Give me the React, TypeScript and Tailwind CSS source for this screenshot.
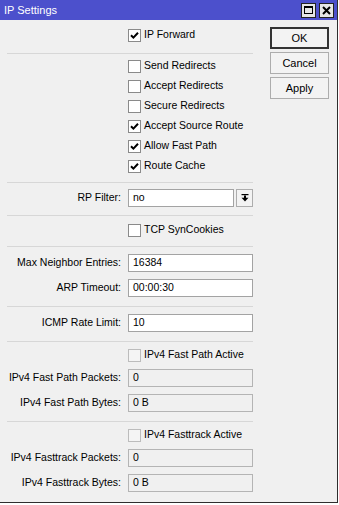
import React from 'react';

const FONT = { fontFamily: '"Liberation Sans", Arial, sans-serif' };

const Sep = ({ mt }: { mt: string }) => <div className={`${mt} h-px bg-[#d7d7d7]`} />;

const CheckBox = ({ checked, disabled }: { checked?: boolean; disabled?: boolean }) => (
  <div
    className={`w-[13px] h-[13px] border flex items-center justify-center ${
      disabled ? 'border-[#bcbcbc] bg-[#f4f4f4]' : 'border-[#8a8a8a] bg-white'
    }`}
  >
    {checked && (
      <svg width="9" height="9" viewBox="0 0 9 9">
        <path d="M1 4.2 L3.4 6.6 L8 1.8" fill="none" stroke="#000" strokeWidth="2" />
      </svg>
    )}
  </div>
);

const CheckRow = ({ label, checked, disabled, mt = '' }: { label: string; checked?: boolean; disabled?: boolean; mt?: string }) => (
  <div className={`${mt} h-[20px] flex items-center pl-[121px]`}>
    <CheckBox checked={checked} disabled={disabled} />
    <span className="ml-[3px] text-black">{label}</span>
  </div>
);

const Field = ({ label, value, disabled, mt }: { label: string; value: string; disabled?: boolean; mt: string }) => (
  <div className={`${mt} flex items-center h-[18px]`}>
    <div className="w-[114px] text-right whitespace-nowrap">{label}</div>
    <div
      className={`ml-[7px] w-[125px] h-[18px] border pl-[4px] flex items-center ${
        disabled ? 'border-[#b4b4b4] bg-[#f0f0f0]' : 'border-[#a3a3a3] bg-white'
      }`}
    >
      {value}
    </div>
  </div>
);

const App = () => {
  return (
    <div className="w-full h-screen bg-white overflow-hidden" style={FONT}>
      <div className="w-[338px] h-[503px] border-r border-b border-[#2e2e2e] bg-[#f0f0f0] flex flex-col text-[10.5px] text-black">
        {/* title bar */}
        <div className="h-[20px] bg-[#4c50cc] flex items-center pl-[4px] pr-[3px] shrink-0">
          <span className="text-white text-[11px] leading-none">IP Settings</span>
          <div className="ml-auto flex gap-[3px]">
            <div className="w-[15px] h-[15px] bg-[#e6e6e6] border border-[#222] flex items-center justify-center">
              <div className="w-[9px] h-[8px] border border-black border-t-2" />
            </div>
            <div className="w-[15px] h-[15px] bg-[#e6e6e6] border border-[#222] flex items-center justify-center">
              <svg width="9" height="9" viewBox="0 0 9 9">
                <path d="M1 1 L8 8 M8 1 L1 8" stroke="#000" strokeWidth="2" />
              </svg>
            </div>
          </div>
        </div>

        <div className="flex">
          {/* form */}
          <div className="w-[246px] ml-[7px]">
            <CheckRow mt="mt-[5px]" label="IP Forward" checked />
            <Sep mt="mt-[8px]" />
            <div className="mt-[2px]">
              <CheckRow label="Send Redirects" />
              <CheckRow label="Accept Redirects" />
              <CheckRow label="Secure Redirects" />
              <CheckRow label="Accept Source Route" checked />
              <CheckRow label="Allow Fast Path" checked />
              <CheckRow label="Route Cache" checked />
            </div>
            <Sep mt="mt-[6px]" />

            <div className="mt-[6px] flex items-center h-[18px]">
              <div className="w-[114px] text-right">RP Filter:</div>
              <div className="ml-[7px] w-[106px] h-[18px] border border-[#a3a3a3] bg-white pl-[4px] flex items-center">no</div>
              <div className="ml-[2px] w-[17px] h-[18px] border border-[#adadad] bg-[#f3f3f3] flex items-center justify-center">
                <svg width="8" height="8" viewBox="0 0 8 8">
                  <rect x="0.5" y="0" width="7" height="1.2" fill="#000" />
                  <rect x="3" y="1.5" width="2" height="2.5" fill="#000" />
                  <path d="M0.5 3.8 L7.5 3.8 L4 7.5 Z" fill="#000" />
                </svg>
              </div>
            </div>
            <Sep mt="mt-[8px]" />

            <CheckRow mt="mt-[4px]" label="TCP SynCookies" />
            <Sep mt="mt-[6px]" />

            <Field mt="mt-[7px]" label="Max Neighbor Entries:" value="16384" />
            <Field mt="mt-[7px]" label="ARP Timeout:" value="00:00:30" />
            <Sep mt="mt-[9px]" />

            <Field mt="mt-[7px]" label="ICMP Rate Limit:" value="10" />
            <Sep mt="mt-[9px]" />

            <CheckRow mt="mt-[3px]" label="IPv4 Fast Path Active" disabled />
            <Field mt="mt-[4px]" label="IPv4 Fast Path Packets:" value="0" disabled />
            <Field mt="mt-[7px]" label="IPv4 Fast Path Bytes:" value="0 B" disabled />
            <Sep mt="mt-[9px]" />

            <CheckRow mt="mt-[3px]" label="IPv4 Fasttrack Active" disabled />
            <Field mt="mt-[4px]" label="IPv4 Fasttrack Packets:" value="0" disabled />
            <Field mt="mt-[7px]" label="IPv4 Fasttrack Bytes:" value="0 B" disabled />
          </div>

          {/* buttons */}
          <div className="ml-[17px] mt-[7px] flex flex-col gap-[3px] text-[11px]">
            <div className="w-[59px] h-[22px] border-2 border-[#333] bg-[#f3f3f3] flex items-center justify-center">OK</div>
            <div className="w-[59px] h-[22px] border border-[#adadad] bg-[#f3f3f3] flex items-center justify-center">Cancel</div>
            <div className="w-[59px] h-[22px] border border-[#adadad] bg-[#f3f3f3] flex items-center justify-center">Apply</div>
          </div>
        </div>
      </div>
    </div>
  );
};

export default App;
